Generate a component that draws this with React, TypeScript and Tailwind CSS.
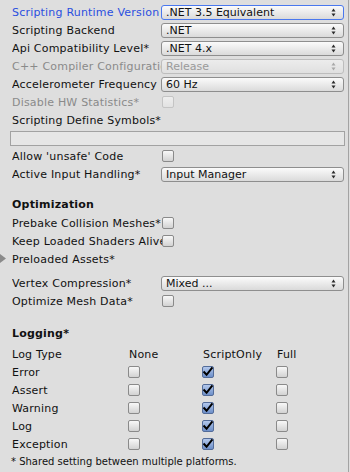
import React from "react";

const font = { fontFamily: '"DejaVu Sans", Verdana, sans-serif' };

function Arrows({ disabled }: { disabled?: boolean }) {
  const c = disabled ? "#a8a8a8" : "#2a2a2a";
  return (
    <svg width="5" height="9" viewBox="0 0 5 9" className="shrink-0">
      <path d="M2.5 0.5 L4.5 3.5 L0.5 3.5 Z" fill={c} />
      <path d="M2.5 8.5 L4.5 5.5 L0.5 5.5 Z" fill={c} />
    </svg>
  );
}

function Dropdown({ value, focused, disabled }: { value: string; focused?: boolean; disabled?: boolean }) {
  const border = focused ? "border-[#4a78ee]" : disabled ? "border-[#bdbdbd]" : "border-[#8e8e8e]";
  const bg = disabled
    ? "bg-[linear-gradient(#ececec,#e0e0e0)]"
    : "bg-[linear-gradient(#fbfbfb,#dadada)]";
  return (
    <div
      className={`absolute left-[149px] top-[2px] w-[183px] h-[15px] border rounded-[3px] ${border} ${bg} flex items-center pl-[4px] pr-[7px] ${disabled ? "text-[#9a9a9a]" : "text-[#111]"}`}
    >
      <span className="flex-1 truncate leading-none">{value}</span>
      <Arrows disabled={disabled} />
    </div>
  );
}

function Check({ checked, disabled }: { checked?: boolean; disabled?: boolean }) {
  if (checked) {
    return (
      <div className="w-[12px] h-[12px] rounded-[2px] border border-[#536c99] bg-[linear-gradient(#b3c8ec,#6d8fc9)] relative">
        <svg width="12" height="12" viewBox="0 0 12 12" className="absolute left-[-1px] top-[-1px]">
          <path d="M2.2 6.2 L4.6 8.8 L9.8 2.2" stroke="#000" strokeWidth="2" fill="none" strokeLinecap="square" />
        </svg>
      </div>
    );
  }
  return (
    <div
      className={`w-[12px] h-[12px] rounded-[2px] border ${disabled ? "border-[#c4c4c4] bg-[linear-gradient(#eeeeee,#e2e2e2)]" : "border-[#8a8a8a] bg-[linear-gradient(#f8f8f8,#d2d2d2)]"}`}
    />
  );
}

function Row({
  label,
  color = "text-[#111]",
  children,
}: {
  label: string;
  color?: string;
  children?: React.ReactNode;
}) {
  return (
    <div className="relative flex items-center h-[18px]">
      <div className={`w-[150px] shrink-0 overflow-hidden whitespace-nowrap tracking-[0.2px] ${color}`}>{label}</div>
      {children}
    </div>
  );
}

function CheckCell({ checked, disabled }: { checked?: boolean; disabled?: boolean }) {
  return (
    <div className="absolute left-[150px] top-[3px] flex items-center">
      <Check checked={checked} disabled={disabled} />
    </div>
  );
}

export default function App() {
  const logs = ["Error", "Assert", "Warning", "Log", "Exception"];
  return (
    <div className="w-[350px] h-[472px] bg-[#dedede] overflow-hidden flex" style={font}>
      <div className="w-[349px] h-full border-r border-[#a3a3a3] text-[11px] leading-none pl-[12px] pt-[3px]">
        <Row label="Scripting Runtime Version" color="text-[#2a4fe0]">
          <Dropdown value=".NET 3.5 Equivalent" focused />
        </Row>
        <Row label="Scripting Backend">
          <Dropdown value=".NET" />
        </Row>
        <Row label="Api Compatibility Level*">
          <Dropdown value=".NET 4.x" />
        </Row>
        <Row label="C++ Compiler Configuration" color="text-[#8a8a8a]">
          <Dropdown value="Release" disabled />
        </Row>
        <Row label="Accelerometer Frequency">
          <Dropdown value="60 Hz" />
        </Row>
        <Row label="Disable HW Statistics*" color="text-[#8a8a8a]">
          <CheckCell disabled />
        </Row>
        <Row label="Scripting Define Symbols*" />
        <div className="h-[18px] flex items-center pr-[3px] ml-[-2px]">
          <div className="w-full h-[15px] border border-[#a2a2a2] bg-[#e6e6e6]" />
        </div>
        <Row label="Allow 'unsafe' Code">
          <CheckCell />
        </Row>
        <Row label="Active Input Handling*">
          <Dropdown value="Input Manager" />
        </Row>

        <div className="h-[11px]" />
        <div className="h-[20px] flex items-center font-bold text-[#111] tracking-[0.2px]">Optimization</div>
        <Row label="Prebake Collision Meshes*">
          <CheckCell />
        </Row>
        <Row label="Keep Loaded Shaders Alive*">
          <CheckCell />
        </Row>
        <div className="relative h-[18px] flex items-center text-[#111] tracking-[0.2px]">
          <svg width="7" height="9" viewBox="0 0 7 9" className="absolute left-[-12px] top-[4px]">
            <path d="M0 0 L6 4.5 L0 9 Z" fill="#8a8a8a" />
          </svg>
          Preloaded Assets*
        </div>
        <div className="h-[6px]" />
        <Row label="Vertex Compression*">
          <Dropdown value="Mixed ..." />
        </Row>
        <Row label="Optimize Mesh Data*">
          <CheckCell />
        </Row>

        <div className="h-[13px]" />
        <div className="h-[20px] flex items-center font-bold text-[#111] tracking-[0.2px]">Logging*</div>
        <div className="h-[2px]" />
        <div className="h-[18px] flex items-center text-[#111] tracking-[0.2px]">
          <div className="w-[117px]">Log Type</div>
          <div className="w-[74px]">None</div>
          <div className="w-[74px]">ScriptOnly</div>
          <div>Full</div>
        </div>
        {logs.map((l) => (
          <div key={l} className="h-[18px] flex items-center text-[#111] tracking-[0.2px]">
            <div className="w-[116px]">{l}</div>
            <div className="w-[74px]">
              <Check />
            </div>
            <div className="w-[74px]">
              <Check checked />
            </div>
            <div>
              <Check />
            </div>
          </div>
        ))}
        <div className="h-[18px] flex items-center text-[10px] text-[#111] ml-[-1px]">
          * Shared setting between multiple platforms.
        </div>
      </div>
    </div>
  );
}
